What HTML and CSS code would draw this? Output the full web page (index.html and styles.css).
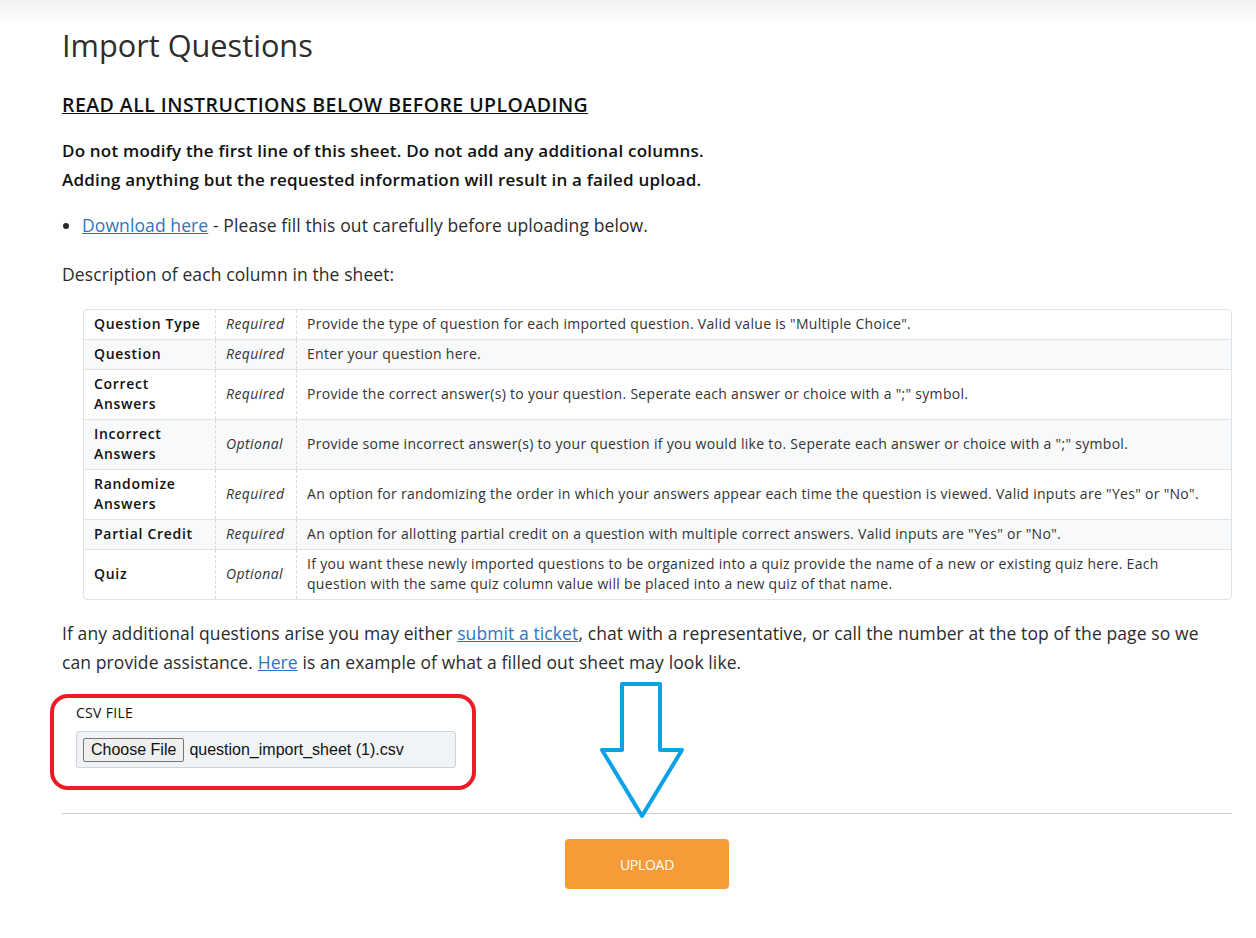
FILE: index.html
```html
<!DOCTYPE html>
<html>
<head>
<meta charset="utf-8">
<link rel="stylesheet" href="styles.css">
</head>
<body>
<div class="topshade"></div>
<main class="page">
  <h1 class="title">Import Questions</h1>
  <h2 class="warn">READ ALL INSTRUCTIONS BELOW BEFORE UPLOADING</h2>
  <p class="strong">Do not modify the first line of this sheet. Do not add any additional columns.<br>Adding anything but the requested information will result in a failed upload.</p>
  <ul class="bullets">
    <li><a href="#">Download here</a> - Please fill this out carefully before uploading below.</li>
  </ul>
  <p class="text">Description of each column in the sheet:</p>
  <div class="tablewrap">
    <table class="cols">
      <tr><th>Question Type</th><td class="req">Required</td><td>Provide the type of question for each imported question. Valid value is "Multiple Choice".</td></tr>
      <tr><th>Question</th><td class="req">Required</td><td>Enter your question here.</td></tr>
      <tr><th>Correct<br>Answers</th><td class="req">Required</td><td>Provide the correct answer(s) to your question. Seperate each answer or choice with a ";" symbol.</td></tr>
      <tr><th>Incorrect<br>Answers</th><td class="req">Optional</td><td>Provide some incorrect answer(s) to your question if you would like to. Seperate each answer or choice with a ";" symbol.</td></tr>
      <tr><th>Randomize<br>Answers</th><td class="req">Required</td><td>An option for randomizing the order in which your answers appear each time the question is viewed. Valid inputs are "Yes" or "No".</td></tr>
      <tr><th>Partial Credit</th><td class="req">Required</td><td>An option for allotting partial credit on a question with multiple correct answers. Valid inputs are "Yes" or "No".</td></tr>
      <tr><th>Quiz</th><td class="req">Optional</td><td>If you want these newly imported questions to be organized into a quiz provide the name of a new or existing quiz here. Each question with the same quiz column value will be placed into a new quiz of that name.</td></tr>
    </table>
  </div>
  <p class="text help">If any additional questions arise you may either <a href="#">submit a ticket</a>, chat with a representative, or call the number at the top of the page so we can provide assistance. <a href="#">Here</a> is an example of what a filled out sheet may look like.</p>
  <div class="uploadarea">
    <div class="field">
      <label class="label">CSV FILE</label>
      <div class="filebox"><button class="choose" type="button">Choose File</button><span class="fname">question_import_sheet (1).csv</span></div>
    </div>
    <div class="redbox"></div>
    <svg class="arrow" width="92" height="140" viewBox="0 0 92 140">
      <path d="M24 4 H62 V70 H84 L44 136 L4 70 H24 Z" fill="none" stroke="#0aa2e6" stroke-width="4" stroke-linejoin="round"/>
    </svg>
  </div>
  <hr class="rule">
  <div class="actions"><button class="upload" type="button">UPLOAD</button></div>
</main>
</body>
</html>
```
FILE: styles.css
```css
html, body {
  margin: 0;
  padding: 0;
  background: #fff;
}
body {
  font-family: "Open Sans", Lato, sans-serif;
  color: #2b2b2b;
  position: relative;
}
.topshade {
  position: absolute;
  left: 0;
  right: 0;
  top: 0;
  height: 24px;
  background: linear-gradient(#f2f2f2, #fff);
}
.page {
  position: relative;
  padding: 24px 24px 40px 62px;
}
.title {
  margin: 0;
  font-weight: 400;
  font-size: 30.7px;
  line-height: 42px;
  color: #2d2d2d;
}
.warn {
  margin: 27px 0 0;
  font-size: 19.5px;
  letter-spacing: 0.45px;
  font-weight: 600;
  text-decoration: underline;
  line-height: 24px;
  color: #111;
}
.strong {
  margin: 19px 0 0;
  font-weight: 600;
  font-size: 17px;
  letter-spacing: 0.2px;
  line-height: 29px;
  color: #111;
}
.bullets {
  margin: 18px 0 0;
  padding-left: 20px;
  font-size: 17.5px;
  letter-spacing: 0.1px;
  line-height: 26px;
  font-weight: 400;
}
a {
  color: #2e74c2;
}
.text {
  margin: 22px 0 0;
  font-size: 17.5px;
  letter-spacing: 0.1px;
  font-weight: 400;
  line-height: 29px;
}
.tablewrap {
  margin: 20px 0 0 21px;
  border: 1px solid #dfe2e6;
  border-radius: 4px;
  overflow: hidden;
}
.cols {
  width: 100%;
  border-collapse: collapse;
  font-size: 14px;
  letter-spacing: 0.3px;
  line-height: 20px;
}
.cols tr + tr {
  border-top: 1px solid #dfe2e6;
}
.cols tr:nth-child(even) {
  background: #f7f9fa;
}
.cols th {
  text-align: left;
  font-weight: 600;
  letter-spacing: 0.7px;
  width: 111px;
  padding: 4px 10px 5px;
  color: #111;
  border-right: 1px dashed #d8d8d8;
}
.cols td {
  padding: 4px 10px 5px;
  font-weight: 400;
  color: #333;
}
.cols td.req {
  width: 60px;
  font-style: italic;
  letter-spacing: 0.4px;
  border-right: 1px dashed #d8d8d8;
}
.help {
  margin-top: 19px;
}
.uploadarea {
  position: relative;
  height: 136px;
}
.field {
  padding: 28px 0 0 14px;
}
.label {
  display: block;
  font-size: 14px;
  letter-spacing: 0.3px;
  font-weight: 400;
  line-height: 16px;
  color: #111;
}
.filebox {
  box-sizing: border-box;
  margin-top: 10px;
  width: 380px;
  height: 37px;
  background: #f1f4f7;
  border: 1px solid #cfd3d7;
  border-radius: 3px;
  display: flex;
  align-items: center;
  padding-left: 6px;
  font-family: "Liberation Sans", Arial, sans-serif;
  font-size: 16px;
  color: #111;
}
.choose {
  font-family: "Liberation Sans", Arial, sans-serif;
  font-size: 16px;
  background: #efefef;
  border: 1px solid #767676;
  border-radius: 2px;
  padding: 1px 7px;
  color: #111;
  height: 24px;
  margin-right: 5px;
}
.redbox {
  position: absolute;
  left: -12px;
  top: 17px;
  width: 418px;
  height: 88px;
  border: 4px solid #ed1c24;
  border-radius: 18px;
}
.arrow {
  position: absolute;
  left: 536px;
  top: 3px;
}
.rule {
  margin: 0;
  border: 0;
  border-top: 1px solid #cbcbcb;
  width: 1170px;
}
.actions {
  display: flex;
  justify-content: center;
  padding: 25px 0 0;
  width: 1170px;
}
.upload {
  width: 164px;
  height: 50px;
  border: 0;
  border-radius: 4px;
  background: #f59b37;
  color: #fff;
  font-family: "Open Sans", sans-serif;
  font-size: 14px;
  letter-spacing: -0.3px;
}
```
